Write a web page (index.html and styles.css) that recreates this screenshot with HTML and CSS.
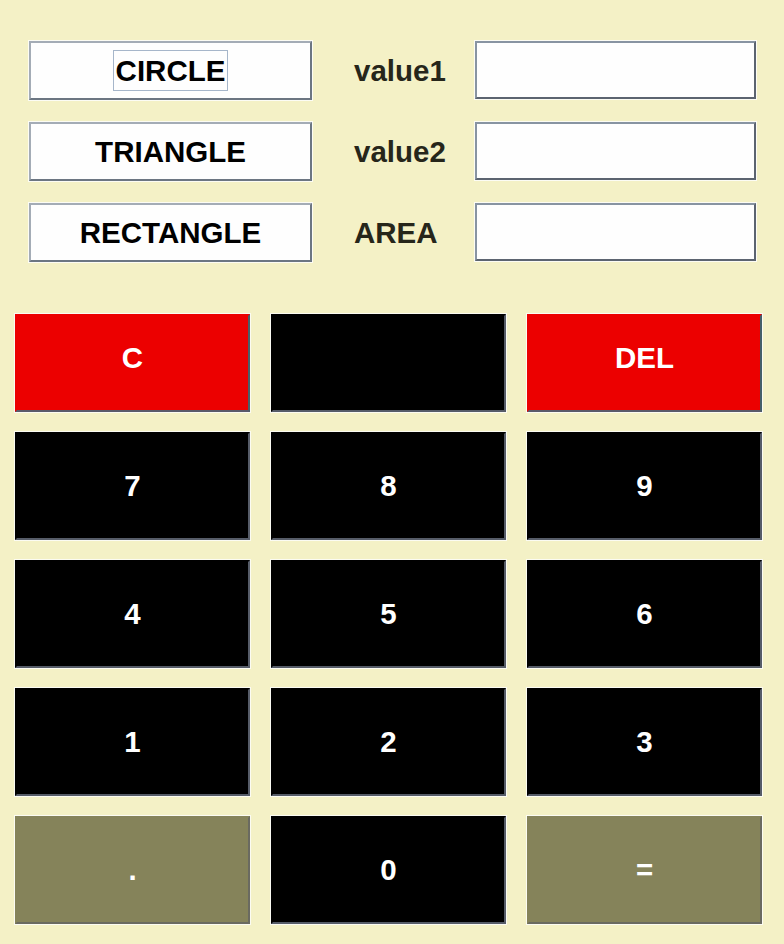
FILE: index.html
```html
<!DOCTYPE html>
<html lang="en">
<head>
  <meta charset="UTF-8">
  <meta name="viewport" content="width=device-width, initial-scale=1.0">
  <title>Area Calculator</title>
  <link rel="stylesheet" href="styles.css">
</head>
<body>

<div class="shapes">
  <!-- Form wählen, Werte eingeben -->
  <button class="shape-btn"><span class="focus">CIRCLE</span></button>
  <label class="field-label" for="value1">value1</label>
  <input class="field" id="value1" type="text">

  <button class="shape-btn">TRIANGLE</button>
  <label class="field-label" for="value2">value2</label>
  <input class="field" id="value2" type="text">

  <button class="shape-btn">RECTANGLE</button>
  <label class="field-label" for="area">AREA</label>
  <input class="field" id="area" type="text">
</div>

<div class="keypad">
  <button class="key top red">C</button>
  <button class="key top"></button>
  <button class="key top red">DEL</button>

  <button class="key">7</button>
  <button class="key">8</button>
  <button class="key">9</button>

  <button class="key">4</button>
  <button class="key">5</button>
  <button class="key">6</button>

  <button class="key">1</button>
  <button class="key">2</button>
  <button class="key">3</button>

  <button class="key olive">.</button>
  <button class="key">0</button>
  <button class="key olive">=</button>
</div>

</body>
</html>
```

FILE: styles.css
```css
body {
  margin: 0;
  background-color: #f4f1c6;
  font-family: "Liberation Sans", Arial, sans-serif;
  font-weight: bold;
}
/* Obere Zeilen: Form-Button, Beschriftung, Eingabefeld */
.shapes {
  display: grid;
  grid-template-columns: 283px 163px 281px;
  grid-auto-rows: 59px;
  row-gap: 22px;
  padding: 41px 0 0 29px;
}
.shape-btn {
  box-sizing: border-box;
  background-color: #fefefe;
  border: 2px solid;
  border-color: #a4acb6 #6c7682 #6c7682 #a4acb6;
  box-shadow: 0 0 0 1px #fcfcf4;
  font-family: inherit;
  font-weight: bold;
  font-size: 29.5px;
  color: #000;
  padding: 0;
}
.focus {
  outline: 1px solid #a6b6ca;
  padding: 3px 2px;
}
.field-label {
  align-self: center;
  padding-left: 42px;
  font-size: 29.5px;
  color: #26261a;
}
.field {
  box-sizing: border-box;
  height: 58px;
  background-color: #fefefe;
  border: 2px solid;
  border-color: #8894a2 #5c6470 #5c6470 #8894a2;
  box-shadow: 0 0 0 1px #fcfcf4;
}
/* Tastenfeld */
.keypad {
  display: grid;
  grid-template-columns: repeat(3, 235px);
  grid-template-rows: 98px repeat(4, 108px);
  column-gap: 21px;
  row-gap: 20px;
  padding: 52px 0 19px 15px;
}
.key {
  box-sizing: border-box;
  background-color: #000;
  border: 2px solid;
  border-color: #000 #565c68 #565c68 #000;
  box-shadow: 0 0 0 1px #fbfbf2;
  color: #fff;
  font-family: inherit;
  font-weight: bold;
  font-size: 29.5px;
  padding: 0;
}
/* oberste Reihe: Text sitzt etwas höher */
.key.top {
  padding-bottom: 10px;
}
.key.red {
  background-color: #ec0000;
  border-color: #ec0000 #46606a #5a5a6a #ec0000;
}
.key.olive {
  background-color: #85835a;
  border-color: #85835a #6a6a60 #6a6a60 #85835a;
}
```
